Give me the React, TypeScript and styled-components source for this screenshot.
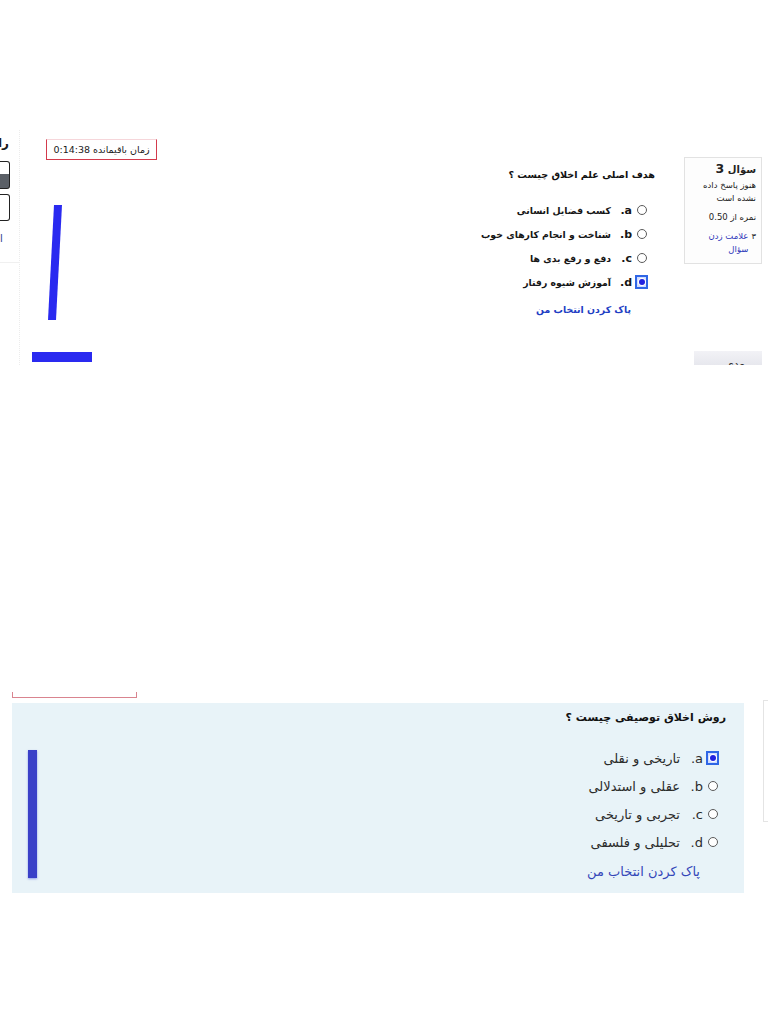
import React from 'react';
import styled, { createGlobalStyle } from 'styled-components';

const GlobalStyle = createGlobalStyle`
  html, body {
    margin: 0;
    padding: 0;
    background: #ffffff;
    overflow-x: hidden;
  }
  body {
    font-family: "DejaVu Sans", "Liberation Sans", sans-serif;
    color: #1a1a1a;
  }
`;

interface Option {
  key: string;
  text: string;
}

const firstOptions: Option[] = [
  { key: 'a', text: 'کسب فضایل انسانی' },
  { key: 'b', text: 'شناخت و انجام کارهای خوب' },
  { key: 'c', text: 'دفع و رفع بدی ها' },
  { key: 'd', text: 'آموزش شیوه رفتار' },
];

const secondOptions: Option[] = [
  { key: 'a', text: 'تاریخی و نقلی' },
  { key: 'b', text: 'عقلی و استدلالی' },
  { key: 'c', text: 'تجربی و تاریخی' },
  { key: 'd', text: 'تحلیلی و فلسفی' },
];

const Page = styled.div`
  width: 768px;
  overflow: hidden;
`;

/* ---------- top capture ---------- */

const TopScreen = styled.section`
  display: flex;
  align-items: flex-start;
  height: 365px;
  box-sizing: border-box;
  padding-top: 130px;
  overflow: hidden;
`;

const SideStub = styled.div`
  width: 20px;
  height: 235px;
  box-sizing: border-box;
  border-right: 1px dotted #ececec;
  display: flex;
  flex-direction: column;
  align-items: flex-start;
`;

const StubTitle = styled.div`
  font-size: 12px;
  font-weight: bold;
  line-height: 14px;
  margin-top: 6px;
  margin-left: -2px;
  direction: rtl;
  white-space: nowrap;
`;

const StubButton = styled.div<{ $dark?: boolean }>`
  width: 10px;
  height: ${({ $dark }) => ($dark ? 28 : 27)}px;
  margin-top: ${({ $dark }) => ($dark ? 11 : 5)}px;
  box-sizing: border-box;
  border: 1px solid #222;
  border-left: none;
  border-radius: 0 3px 3px 0;
  background: ${({ $dark }) =>
    $dark ? 'linear-gradient(#ffffff 0 45%, #5a5f66 45% 100%)' : '#ffffff'};
`;

const StubLink = styled.div`
  font-size: 10px;
  color: #2a3f8f;
  margin-top: 12px;
  line-height: 12px;
`;

const StubRule = styled.div`
  width: 20px;
  margin-top: 17px;
  border-top: 1px solid #f0f0f0;
`;

const LeftCol = styled.div`
  width: 137px;
  box-sizing: border-box;
  padding-left: 12px;
  margin-top: 9px;
  display: flex;
  flex-direction: column;
`;

const Timer = styled.div`
  margin-left: 14px;
  width: 111px;
  height: 21px;
  box-sizing: border-box;
  border: 1px solid #d33a4c;
  border-top-color: #f6d6da;
  display: flex;
  align-items: center;
  justify-content: center;
  direction: rtl;
  font-size: 9.5px;
  color: #1a1a1a;
  white-space: nowrap;
`;

const Drawing = styled.svg`
  display: block;
`;

const Content = styled.div<{ $pad: number }>`
  flex: 1;
  direction: rtl;
  padding-right: ${({ $pad }) => $pad}px;
`;

const Title = styled.div<{ $size: number; $top?: number }>`
  font-size: ${({ $size }) => $size}px;
  font-weight: bold;
  line-height: 16px;
  margin-top: ${({ $top }) => $top ?? 0}px;
  color: #111;
`;

const OptionList = styled.div<{ $gap: number }>`
  display: flex;
  flex-direction: column;
  padding-right: 7px;
  margin-top: ${({ $gap }) => $gap}px;
`;

const OptionRow = styled.label<{ $h: number; $size: number; $bold?: boolean }>`
  display: flex;
  align-items: center;
  height: ${({ $h }) => $h}px;
  font-size: ${({ $size }) => $size}px;
  font-weight: ${({ $bold }) => ($bold ? 'bold' : 'normal')};
  color: ${({ $bold }) => ($bold ? '#161616' : '#2b2b2b')};
`;

const RadioWrap = styled.span`
  width: 13px;
  height: 13px;
  display: flex;
  align-items: center;
  justify-content: center;
  flex-shrink: 0;
`;

const Radio = styled.span`
  width: 10px;
  height: 10px;
  box-sizing: border-box;
  border: 1px solid #5a5a5a;
  border-radius: 50%;
  background: #fff;
`;

const RadioOn = styled.span`
  width: 14px;
  height: 14px;
  box-sizing: border-box;
  border: 2px solid #2f66e6;
  background: #cfdcff;
  display: flex;
  align-items: center;
  justify-content: center;

  &::after {
    content: '';
    width: 6px;
    height: 6px;
    border-radius: 50%;
    background: #2222e0;
    box-shadow: 0 0 0 1px #ffffff;
  }
`;

const Letter = styled.span<{ $w: number; $size: number }>`
  width: ${({ $w }) => $w}px;
  margin-right: 3px;
  text-align: right;
  font-size: ${({ $size }) => $size}px;
  flex-shrink: 0;
`;

const OptionText = styled.span<{ $gap: number }>`
  margin-right: ${({ $gap }) => $gap}px;
  white-space: nowrap;
`;

const ClearLink = styled.div<{ $indent: number; $size: number; $bold?: boolean }>`
  margin-top: 8px;
  padding-right: ${({ $indent }) => $indent}px;
  line-height: 16px;
  font-size: ${({ $size }) => $size}px;
  font-weight: ${({ $bold }) => ($bold ? 'bold' : 'normal')};
  color: ${({ $bold }) => ($bold ? '#1f3fc4' : '#3446b8')};
`;

const InfoCol = styled.div`
  width: 78px;
  margin-right: 6px;
  margin-top: 27px;
  display: flex;
  flex-direction: column;
`;

const InfoBox = styled.div`
  height: 107px;
  box-sizing: border-box;
  border: 1px solid #e2e2e2;
  background: #fdfdfd;
  padding: 4px 5px 0 4px;
  direction: rtl;
  font-size: 8.5px;
  line-height: 13px;
  color: #222;
`;

const InfoHead = styled.div`
  font-size: 10px;
  font-weight: bold;
  margin-bottom: 3px;

  b {
    font-size: 12.5px;
  }
`;

const InfoLine = styled.div<{ $gap?: number }>`
  margin-top: ${({ $gap }) => $gap ?? 0}px;
`;

const InfoFlag = styled.div`
  margin-top: 6px;
  display: flex;
  align-items: flex-start;
  gap: 3px;
`;

const FlagGlyph = styled.span`
  color: #222;
  flex-shrink: 0;
`;

const FlagText = styled.span`
  color: #2c35b8;
  width: 46px;
`;

const NextStub = styled.div`
  margin-top: 87px;
  margin-left: 10px;
  height: 20px;
  background: linear-gradient(#f2f2f6, #e2e3ea);
  direction: rtl;
  font-size: 11px;
  line-height: 28px;
  padding-right: 14px;
  color: #333;
  overflow: hidden;
  letter-spacing: 3px;
`;

/* ---------- lower capture ---------- */

const LowerScreen = styled.section`
  margin-top: 327px;
  display: flex;
  flex-direction: column;
`;

const TimerEdge = styled.div`
  margin-left: 12px;
  width: 125px;
  height: 6px;
  box-sizing: border-box;
  border: 1px solid #d9848f;
  border-top: none;
`;

const LowerRow = styled.div`
  display: flex;
  align-items: flex-start;
  margin-top: 5px;
  padding-left: 12px;
`;

const Panel = styled.div`
  width: 732px;
  height: 190px;
  box-sizing: border-box;
  background: #e8f3f8;
  display: flex;
  align-items: flex-start;
  padding-top: 7px;
  flex-shrink: 0;
`;

const PanelBar = styled.div`
  width: 9px;
  height: 128px;
  margin-left: 16px;
  margin-top: 40px;
  background: #3a40c8;
  box-shadow: 0 1px 2px rgba(60, 70, 220, 0.5);
  flex-shrink: 0;
`;

const SideCard = styled.div`
  width: 20px;
  height: 122px;
  margin-left: 19px;
  margin-top: -3px;
  box-sizing: border-box;
  border: 1px solid #e4e4e4;
  background: #fff;
  flex-shrink: 0;
`;

const renderRadio = (on: boolean) => (
  <RadioWrap>{on ? <RadioOn /> : <Radio />}</RadioWrap>
);

const App: React.FC = () => {
  return (
    <Page>
      <GlobalStyle />
      <TopScreen>
        <SideStub>
          <StubTitle>را</StubTitle>
          <StubButton $dark />
          <StubButton />
          <StubLink>ا</StubLink>
          <StubRule />
        </SideStub>

        <LeftCol>
          <Timer>زمان باقیمانده 0:14:38</Timer>
          <Drawing width="125" height="205" viewBox="0 0 125 205">
            <polygon points="22,45 30,45 24,160 16,160" fill="#2a2af0" />
            <rect x="0" y="192" width="60" height="10" fill="#2a2af0" />
          </Drawing>
        </LeftCol>

        <Content $pad={29}>
          <Title $size={9.6} $top={37}>
            هدف اصلی علم اخلاق چیست ؟
          </Title>
          <OptionList $gap={15}>
            {firstOptions.map((o) => (
              <OptionRow key={o.key} $h={24} $size={9.3} $bold>
                {renderRadio(o.key === 'd')}
                <Letter $w={12} $size={11}>
                  {o.key}.
                </Letter>
                <OptionText $gap={9}>{o.text}</OptionText>
              </OptionRow>
            ))}
          </OptionList>
          <ClearLink $indent={24} $size={9.4} $bold>
            پاک کردن انتخاب من
          </ClearLink>
        </Content>

        <InfoCol>
          <InfoBox>
            <InfoHead>
              سؤال <b>3</b>
            </InfoHead>
            <InfoLine>هنوز پاسخ داده نشده است</InfoLine>
            <InfoLine $gap={6}>نمره از 0.50</InfoLine>
            <InfoFlag>
              <FlagGlyph>۳</FlagGlyph>
              <FlagText>علامت زدن سؤال</FlagText>
            </InfoFlag>
          </InfoBox>
          <NextStub>بعدی</NextStub>
        </InfoCol>
      </TopScreen>

      <LowerScreen>
        <TimerEdge />
        <LowerRow>
          <Panel>
            <PanelBar />
            <Content $pad={18}>
              <Title $size={11}>روش اخلاق توصیفی چیست ؟</Title>
              <OptionList $gap={18}>
                {secondOptions.map((o) => (
                  <OptionRow key={o.key} $h={28} $size={13}>
                    {renderRadio(o.key === 'a')}
                    <Letter $w={14} $size={13}>
                      {o.key}.
                    </Letter>
                    <OptionText $gap={9}>{o.text}</OptionText>
                  </OptionRow>
                ))}
              </OptionList>
              <ClearLink $indent={26} $size={13}>
                پاک کردن انتخاب من
              </ClearLink>
            </Content>
          </Panel>
          <SideCard />
        </LowerRow>
      </LowerScreen>
    </Page>
  );
};

export default App;
